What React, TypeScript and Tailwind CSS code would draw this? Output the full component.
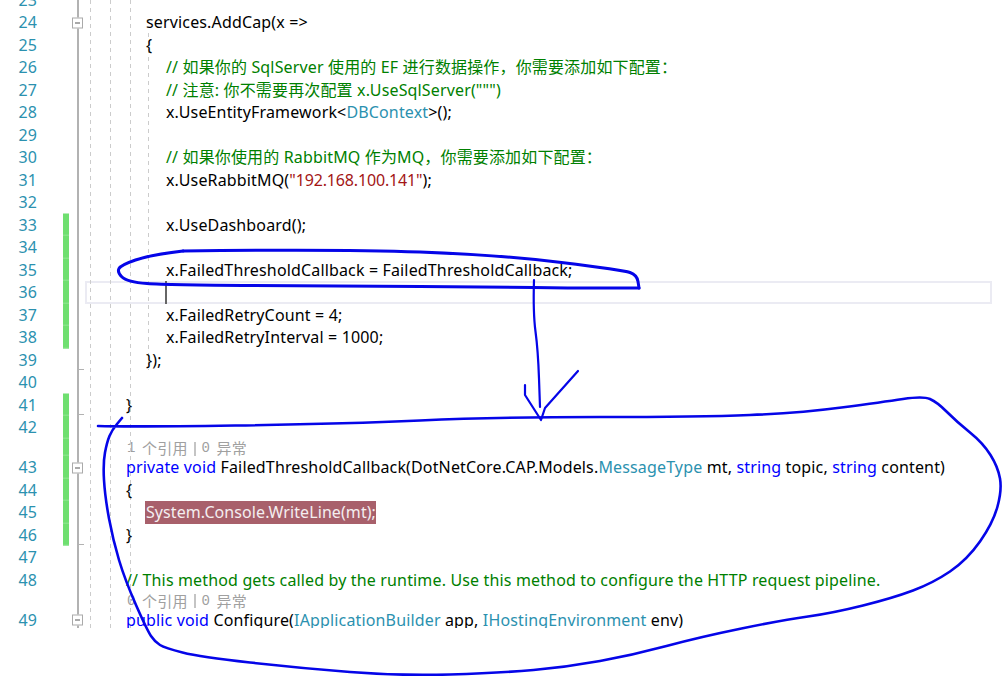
import type { ReactNode } from "react";

const K = ({ children }: { children: ReactNode }) => <span className="text-[#0000ff]">{children}</span>;
const T = ({ children }: { children: ReactNode }) => <span className="text-[#2b91af]">{children}</span>;
const C = ({ children }: { children: ReactNode }) => <span className="text-[#008000]">{children}</span>;
const S = ({ children }: { children: ReactNode }) => <span className="tracking-[-0.15px] text-[#a31515]">{children}</span>;

type Row = {
  n: number;
  code?: ReactNode;
  indent?: number;
  green?: boolean;
  fold?: boolean;
  end?: boolean;
  lens?: string;
  current?: boolean;
};

const rows: Row[] = [
  { n: 23 },
  { n: 24, indent: 1, fold: true, code: "services.AddCap(x =>" },
  { n: 25, indent: 1, code: "{" },
  { n: 26, indent: 2, code: <C>// 如果你的 SqlServer 使用的 EF 进行数据操作，你需要添加如下配置：</C> },
  { n: 27, indent: 2, code: <C>// 注意: 你不需要再次配置 x.UseSqlServer(""")</C> },
  { n: 28, indent: 2, code: <>x.UseEntityFramework&lt;<T>DBContext</T>&gt;();</> },
  { n: 29 },
  { n: 30, indent: 2, code: <C>// 如果你使用的 RabbitMQ 作为MQ，你需要添加如下配置：</C> },
  { n: 31, indent: 2, code: <>x.UseRabbitMQ(<S>"192.168.100.141"</S>);</> },
  { n: 32 },
  { n: 33, indent: 2, green: true, code: "x.UseDashboard();" },
  { n: 34, green: true },
  { n: 35, indent: 2, green: true, code: "x.FailedThresholdCallback = FailedThresholdCallback;" },
  { n: 36, green: true, current: true },
  { n: 37, indent: 2, green: true, code: "x.FailedRetryCount = 4;" },
  { n: 38, indent: 2, green: true, code: "x.FailedRetryInterval = 1000;" },
  { n: 39, indent: 1, end: true, code: "});" },
  { n: 40 },
  { n: 41, indent: 0, green: true, end: true, code: "}" },
  { n: 42, green: true },
  {
    n: 43,
    indent: 0,
    green: true,
    fold: true,
    lens: "1",
    code: (
      <>
        <K>private</K> <K>void</K> FailedThresholdCallback(DotNetCore.CAP.Models.<T>MessageType</T> mt, <K>string</K> topic,{" "}
        <K>string</K> content)
      </>
    ),
  },
  { n: 44, indent: 0, green: true, code: "{" },
  {
    n: 45,
    indent: 1,
    green: true,
    code: <span className="-ml-px inline-block h-[22.5px] bg-[#a8606b] pl-px tracking-[0.08px] text-[#f4eef0]">System.Console.WriteLine(mt);</span>,
  },
  { n: 46, indent: 0, green: true, end: true, code: "}" },
  { n: 47 },
  { n: 48, indent: 0, code: <C>// This method gets called by the runtime. Use this method to configure the HTTP request pipeline.</C> },
  {
    n: 49,
    indent: 0,
    fold: true,
    lens: "0",
    code: (
      <>
        <K>public</K> <K>void</K> Configure(<T>IApplicationBuilder</T> app, <T>IHostingEnvironment</T> env)
      </>
    ),
  },
];

const indentClass = ["pl-[42px]", "pl-[62px]", "pl-[82px]"];

// margin cells shared by the code rows and the "references" rows above them
function Margin({ row, number, fold, end, h }: { row: Row; number?: boolean; fold?: boolean; end?: boolean; h: string }) {
  return (
    <>
      <div className="w-[37px] shrink-0 text-right text-[#2b91af]">{number ? row.n : ""}</div>
      <div className="w-[26px] shrink-0" />
      <div className={`w-[6px] shrink-0 -translate-y-[0.5px] ${h} ${row.green ? "border-b border-[#86e487] bg-[#6fdf70]" : ""}`} />
      <div className="w-[3px] shrink-0" />
      <div className="relative flex w-[12px] shrink-0 justify-center">
        <div className="h-full w-[2px] bg-[#b2b2b2]" />
        {end && <div className="absolute bottom-[1px] left-[7px] h-px w-[5px] bg-[#b2b2b2]" />}
        {fold && (
          <div className="absolute left-0 top-1/2 flex h-[11px] w-[11px] -translate-y-1/2 items-center justify-center border border-[#aaaaaa] bg-white">
            <div className="h-px w-[5px] bg-[#555555]" />
          </div>
        )}
      </div>
    </>
  );
}

function Lens({ row }: { row: Row }) {
  return (
    <div className="flex h-[17.5px]">
      <Margin row={row} h="h-[17.5px]" />
      <div className="flex h-[15px] items-center self-end pl-[43px] text-[15px] leading-[15px] tracking-[0.2px] text-[#a0a0a0]">
        <span className="w-[15px] font-['Liberation_Mono',monospace] text-[14px]">{row.lens}</span>
        <span>个引用</span>
        <span className="mx-[6px] h-[14px] w-[2px] bg-[#c4c4c4]" />
        <span className="w-[15px] font-['Liberation_Mono',monospace] text-[14px]">0</span>
        <span>异常</span>
      </div>
    </div>
  );
}

const guides = ["left-[90px]", "left-[110px]", "left-[130px]"];

function smooth(pts: number[][]) {
  let d = `M${pts[0][0]} ${pts[0][1]}`;
  for (let i = 1; i < pts.length - 1; i++) {
    const mx = (pts[i][0] + pts[i + 1][0]) / 2;
    const my = (pts[i][1] + pts[i + 1][1]) / 2;
    d += ` Q${pts[i][0]} ${pts[i][1]} ${mx} ${my}`;
  }
  const last = pts[pts.length - 1];
  return d + ` L${last[0]} ${last[1]}`;
}

const ring = [
  [183, 251], [150, 255], [121, 265], [117, 272], [127, 282], [167, 285], [340, 286], [500, 287], [567, 288], [639, 288],
];
const ringTop = [
  [183, 251], [340, 249], [500, 255], [623, 270], [637, 275], [639, 288],
];
const shaft = [
  [534, 280], [533, 313], [538, 350], [540, 407],
];
const loop = [
  [98, 426], [130, 427], [340, 424], [500, 417], [700, 417], [800, 413], [883, 402], [923, 396], [937, 402], [957, 422],
  [983, 443], [998, 467], [1002, 490], [993, 523], [967, 560], [933, 583], [893, 598], [833, 613], [783, 620], [700, 637],
  [633, 655], [567, 667], [500, 673], [400, 676], [300, 668], [200, 657], [165, 648], [155, 642], [147, 630], [125, 580],
  [113, 540], [105, 497], [103, 463], [107, 442], [112, 430], [122, 418],
];

export default function App() {
  return (
    <div className="relative h-[676px] w-[1003px] overflow-hidden bg-white font-['Noto_Sans','Noto_Sans_CJK_SC',sans-serif] text-[16px] tracking-[0.15px] text-black">
      <div className="relative h-[628px] overflow-hidden">
        <div className="-mt-[11.25px]">
          {rows.map((row) => (
            <div key={row.n}>
              {row.lens && <Lens row={row} />}
              <div className="relative flex h-[22.5px] leading-[22.5px]">
                <Margin row={row} number fold={row.fold} end={row.end} h="h-[22.5px]" />
                {row.current && (
                  <>
                    <div className="absolute left-[85px] top-0 h-[22.5px] w-[907px] border-2 border-[#ebebf3]" />
                    <div className="absolute left-[165px] top-0 h-[22.5px] w-[2px] bg-[#666666]" />
                  </>
                )}
                <div className={`relative z-10 whitespace-pre ${indentClass[row.indent ?? 0]}`}>{row.code}</div>
              </div>
            </div>
          ))}
        </div>
        {guides.map((g) => (
          <div
            key={g}
            className={`absolute top-0 h-full w-px bg-[repeating-linear-gradient(to_bottom,#cccccc_0_4px,transparent_4px_8px)] ${g}`}
          />
        ))}
        <div className="absolute left-[148px] top-[33px] h-[337px] w-px bg-[repeating-linear-gradient(to_bottom,#cccccc_0_4px,transparent_4px_8px)]" />
      </div>
      <svg className="absolute left-0 top-0 z-20" width="1003" height="676" fill="none" stroke="#0505e8" strokeWidth="3" strokeLinecap="round" strokeLinejoin="round">
        <path d={smooth(ring)} />
        <path d={smooth(ringTop)} />
        <path d={smooth(shaft)} strokeWidth="2.2" />
        <path d="M525 385 L525 395 L541 420 L545 408 L578 371" strokeWidth="2.2" />
        <path d={smooth(loop)} strokeWidth="2.6" />
      </svg>
    </div>
  );
}
